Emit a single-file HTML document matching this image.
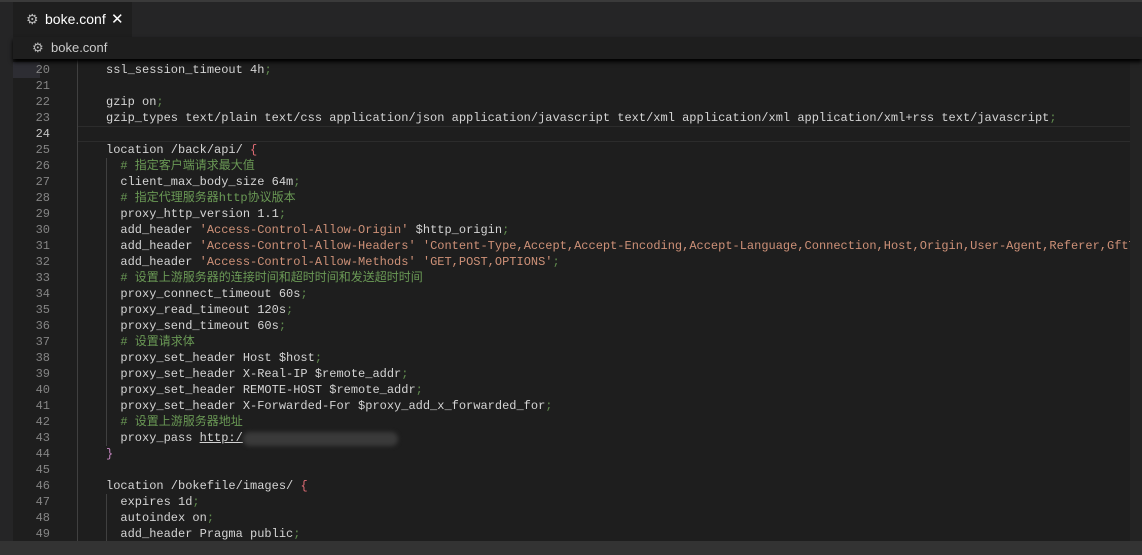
<!DOCTYPE html>
<html><head><meta charset="utf-8"><style>
*{margin:0;padding:0;box-sizing:border-box}
body{width:1142px;height:555px;background:#1e1e1e;overflow:hidden;position:relative;font-family:"Liberation Sans",sans-serif}
#top{position:absolute;left:0;top:0;width:1142px;height:2px;background:#3a3a3a}
#tabs{position:absolute;left:0;top:2px;width:1142px;height:35px;background:#252526}
#tab{position:absolute;left:13px;top:0;width:119px;height:35px;background:#1e1e1e;color:#fff;font-size:14px;line-height:35px;padding-left:32px}
#crumb{position:absolute;left:13px;top:37px;width:1129px;height:22px;background:#1e1e1e;color:#ccc;font-size:13px;line-height:22px;padding-left:38px;box-shadow:0 3px 4px #000;z-index:2}
.gear{position:absolute;color:#bbb;font-size:13px}
#left{position:absolute;left:0;top:2px;width:13px;height:553px;background:#252526}
#ed{position:absolute;left:13px;top:46px;width:1117px;height:495px;overflow:hidden}
.l{position:absolute;left:0;height:16px;width:1117px;font-family:"Liberation Mono","Noto Sans CJK SC",monospace;font-size:12px;line-height:16px;color:#d4d4d4;white-space:pre}
.n{position:absolute;right:1080px;width:40px;text-align:right;color:#858585}
.c{position:absolute;left:93px}
.s{color:#ce9178}.g{color:#6a9955}.p{color:#608b4e}.r{color:#e06c75}.v{color:#c586c0}
.guide{position:absolute;width:1px;background:#404040}
#bot{position:absolute;left:0;top:541px;width:1142px;height:14px;background:#333}
#sb{position:absolute;left:1130px;top:59px;width:12px;height:482px;background:#232323}
</style></head><body>
<div id="top"></div><div id="tabs"><div id="tab"><span class="gear" style="left:13px;top:0;font-size:14px">⚙</span>boke.conf<span style="position:absolute;left:98px;font-size:15px">✕</span></div></div>
<div id="left"></div>
<div id="crumb"><span class="gear" style="left:19px;top:0">⚙</span>boke.conf</div>
<div id="ed">
<div style="position:absolute;left:0;top:16px;width:27px;height:16px;background:#2d2d33"></div>
<div style="position:absolute;left:65px;top:80px;width:1060px;height:16px;border-top:1px solid #2c2c2c;border-bottom:1px solid #2c2c2c"></div>
<div class="guide" style="left:64px;top:0;height:495px"></div>
<div class="guide" style="left:93px;top:112px;height:288px"></div>
<div class="guide" style="left:93px;top:448px;height:60px"></div>
<div class="l" style="top:0"><span class="n">19</span><span class="c">ssl_session_cache shared:SSL:10m<span class="p">;</span></span></div>
<div class="l" style="top:16px"><span class="n">20</span><span class="c">ssl_session_timeout 4h<span class="p">;</span></span></div>
<div class="l" style="top:32px"><span class="n">21</span></div>
<div class="l" style="top:48px"><span class="n">22</span><span class="c">gzip on<span class="p">;</span></span></div>
<div class="l" style="top:64px"><span class="n">23</span><span class="c">gzip_types text/plain text/css application/json application/javascript text/xml application/xml application/xml+rss text/javascript<span class="p">;</span></span></div>
<div class="l" style="top:80px"><span class="n" style="color:#c6c6c6">24</span></div>
<div class="l" style="top:96px"><span class="n">25</span></div>
<div class="l" style="top:112px"><span class="n">26</span></div>
<div class="l" style="top:96px"><span class="c">location /back/api/ <span class="r">{</span></span></div>
<div class="l" style="top:112px"><span class="c">  <span class="g"># 指定客户端请求最大值</span></span></div>
<div class="l" style="top:128px"><span class="n">27</span><span class="c">  client_max_body_size 64m<span class="p">;</span></span></div>
<div class="l" style="top:144px"><span class="n">28</span><span class="c">  <span class="g"># 指定代理服务器http协议版本</span></span></div>
<div class="l" style="top:160px"><span class="n">29</span><span class="c">  proxy_http_version 1.1<span class="p">;</span></span></div>
<div class="l" style="top:176px"><span class="n">30</span><span class="c">  add_header <span class="s">'Access-Control-Allow-Origin'</span> $http_origin<span class="p">;</span></span></div>
<div class="l" style="top:192px"><span class="n">31</span><span class="c">  add_header <span class="s">'Access-Control-Allow-Headers'</span> <span class="s">'Content-Type,Accept,Accept-Encoding,Accept-Language,Connection,Host,Origin,User-Agent,Referer,GftToken'</span></span></div>
<div class="l" style="top:208px"><span class="n">32</span><span class="c">  add_header <span class="s">'Access-Control-Allow-Methods'</span> <span class="s">'GET,POST,OPTIONS'</span><span class="p">;</span></span></div>
<div class="l" style="top:224px"><span class="n">33</span><span class="c">  <span class="g"># 设置上游服务器的连接时间和超时时间和发送超时时间</span></span></div>
<div class="l" style="top:240px"><span class="n">34</span><span class="c">  proxy_connect_timeout 60s<span class="p">;</span></span></div>
<div class="l" style="top:256px"><span class="n">35</span><span class="c">  proxy_read_timeout 120s<span class="p">;</span></span></div>
<div class="l" style="top:272px"><span class="n">36</span><span class="c">  proxy_send_timeout 60s<span class="p">;</span></span></div>
<div class="l" style="top:288px"><span class="n">37</span><span class="c">  <span class="g"># 设置请求体</span></span></div>
<div class="l" style="top:304px"><span class="n">38</span><span class="c">  proxy_set_header Host $host<span class="p">;</span></span></div>
<div class="l" style="top:320px"><span class="n">39</span><span class="c">  proxy_set_header X-Real-IP $remote_addr<span class="p">;</span></span></div>
<div class="l" style="top:336px"><span class="n">40</span><span class="c">  proxy_set_header REMOTE-HOST $remote_addr<span class="p">;</span></span></div>
<div class="l" style="top:352px"><span class="n">41</span><span class="c">  proxy_set_header X-Forwarded-For $proxy_add_x_forwarded_for<span class="p">;</span></span></div>
<div class="l" style="top:368px"><span class="n">42</span><span class="c">  <span class="g"># 设置上游服务器地址</span></span></div>
<div class="l" style="top:384px"><span class="n">43</span><span class="c">  proxy_pass <span style="text-decoration:underline">http:/</span></span></div>
<div style="position:absolute;left:230px;top:386px;width:155px;height:14px;background:#3a3a3a;border-radius:7px;filter:blur(2px)"></div>
<div class="l" style="top:400px"><span class="n">44</span><span class="c"><span class="v">}</span></span></div>
<div class="l" style="top:416px"><span class="n">45</span></div>
<div class="l" style="top:432px"><span class="n">46</span><span class="c">location /bokefile/images/ <span class="r">{</span></span></div>
<div class="l" style="top:448px"><span class="n">47</span><span class="c">  expires 1d<span class="p">;</span></span></div>
<div class="l" style="top:464px"><span class="n">48</span><span class="c">  autoindex on<span class="p">;</span></span></div>
<div class="l" style="top:480px"><span class="n">49</span><span class="c">  add_header Pragma public<span class="p">;</span></span></div>
</div>
<div id="sb"></div>
<div id="bot"></div>
</body></html>
